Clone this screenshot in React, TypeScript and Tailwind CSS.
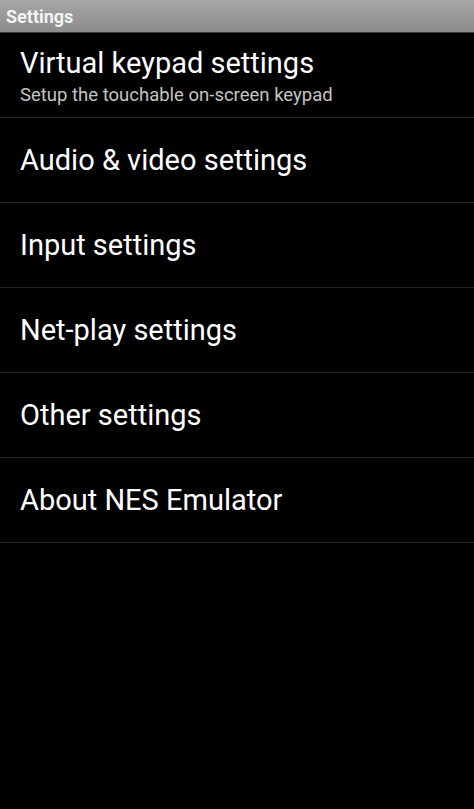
import React from 'react';

const items = [
  { title: 'Virtual keypad settings', summary: 'Setup the touchable on-screen keypad' },
  { title: 'Audio & video settings' },
  { title: 'Input settings' },
  { title: 'Net-play settings' },
  { title: 'Other settings' },
  { title: 'About NES Emulator' },
];

export default function App() {
  return (
    <div className="w-[474px] h-[809px] bg-black font-['Roboto',sans-serif] overflow-hidden">
      {/* Title bar */}
      <div className="h-[33px] bg-gradient-to-b from-[#a6a6a6] to-[#8c8c8c] border-b border-[#3a3a3a] flex items-center px-[6px]">
        <span className="text-[18px] font-bold text-[#f4f4f4]">Settings</span>
      </div>

      {/* Preference list */}
      <div>
        {items.map(item => (
          <div
            key={item.title}
            className={`h-[85px] border-b border-[#222] flex flex-col justify-center px-[20px] ${item.summary ? 'pt-[3px]' : ''}`}
          >
            <div className="text-[29px] leading-[30px] text-white">{item.title}</div>
            {item.summary && (
              <div className="mt-[6px] text-[18.5px] leading-[22px] text-[#c4c4c4]">{item.summary}</div>
            )}
          </div>
        ))}
      </div>
    </div>
  );
}
